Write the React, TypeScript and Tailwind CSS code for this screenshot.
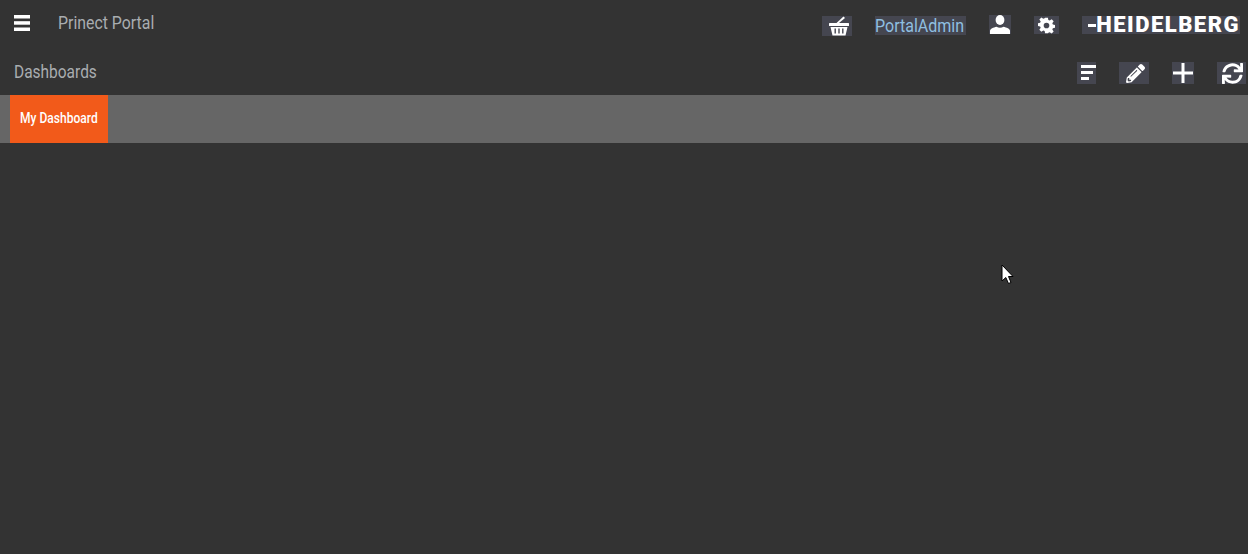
import { FaPencilAlt, FaSync } from "react-icons/fa"

const font = { fontFamily: "Roboto, sans-serif" }

function Hamburger() {
  return (
    <svg viewBox="0 0 16 16" className="ml-[14px] mt-[15px] w-[16px] h-[16px]" fill="white">
      <rect y="0" width="16" height="3.500" />
      <rect y="6.200" width="16" height="3.500" />
      <rect y="12.500" width="16" height="3.500" />
    </svg>
  )
}

function Basket() {
  return (
    <svg viewBox="0 0 20 20" className="w-[20px] h-[20px]" fill="white">
      <path d="M7.500 7 L14.500 0.500 L16 2 L10 7 Z" />
      <rect x="0" y="7" width="20" height="3" rx="0.5" />
      <path d="M1.500 11h17l-2 8.500H3.500z M5.500 12.500v5h1.400v-5z M9.300 12.500v5h1.400v-5z M13.100 12.500v5h1.400v-5z" fillRule="evenodd" />
    </svg>
  )
}

function User() {
  return (
    <svg viewBox="0 0 20 19" className="w-[20px] h-[19px]" fill="white">
      <ellipse cx="10" cy="5" rx="4.400" ry="5" />
      <path d="M0 19v-3c0-2.500 3.500-3.200 6.500-4.200 2 1.400 5 1.400 7 0 3 1 6.500 1.700 6.500 4.200v3z" />
    </svg>
  )
}

function Gear() {
  return (
    <svg viewBox="0 0 24 24" className="w-[17px] h-[17px]" fill="white">
      <path fillRule="evenodd" d="M10 1h4l.6 3.300 1.900.8 2.800-1.900 2.800 2.800-1.900 2.800.8 1.900 3 .6v4l-3 .6-.8 1.900 1.900 2.800-2.800 2.800-2.800-1.900-1.900.8L14 23h-4l-.6-3.300-1.900-.8-2.800 1.900-2.800-2.800 1.900-2.800-.8-1.900-3-.6v-4l3-.6.8-1.900-1.900-2.800 2.800-2.800 2.800 1.900 1.900-.8z M12 8a4 4 0 1 0 0 8a4 4 0 0 0 0-8z" />
    </svg>
  )
}

function Bars() {
  return (
    <svg viewBox="0 0 19 22" className="w-[19px] h-[22px]" fill="white">
      <rect x="4" y="3" width="15" height="3" />
      <rect x="4" y="9" width="12" height="3" />
      <rect x="4" y="15" width="8" height="3" />
    </svg>
  )
}

function PlusIcon() {
  return (
    <svg viewBox="0 0 20 20" className="w-[20px] h-[20px]" fill="white">
      <rect x="8.500" y="0" width="3" height="20" />
      <rect x="0" y="8.500" width="20" height="3" />
    </svg>
  )
}

function Cursor() {
  return (
    <svg viewBox="0 0 13 21" className="absolute left-[1001px] top-[264px] w-[13px] h-[21px]">
      <path d="M1 1 L1 17 L4.800 13.500 L7.500 19.500 L10 18.500 L7.500 12.500 L12 12.500 Z" fill="white" stroke="black" strokeWidth="1" />
    </svg>
  )
}

export default function App() {
  return (
    <div className="relative h-[554px] bg-[#333333] overflow-hidden" style={font}>
      <div className="h-[48px] flex items-start">
        <Hamburger />
        <div className="ml-[28px] mt-[11px] text-[19px] leading-[24px] text-[#a9adb0] origin-left scale-x-[0.835] whitespace-nowrap">Prinect Portal</div>
        <div className="ml-auto flex items-start pr-[8px] pt-[16px]">
          <div className="w-[30px] h-[20px] bg-[#454650] flex justify-center">
            <div className="ml-[4px]"><Basket /></div>
          </div>
          <div className="ml-[23px] w-[91px] h-[19px] bg-[#454650] text-[19px] leading-[19px] text-[#8fbfe0] whitespace-nowrap">
            <span className="inline-block origin-left scale-x-[0.843]">PortalAdmin</span>
          </div>
          <div className="ml-[23px] -mt-[1px] w-[22px] h-[19px] bg-[#454650] flex justify-center"><User /></div>
          <div className="ml-[23px] w-[25px] h-[18px] bg-[#454650] flex justify-center items-center"><Gear /></div>
          <div className="ml-[23px] w-[158px] h-[18px] bg-[#454650] flex items-center pl-[6px]">
            <div className="w-[9px] h-[3px] bg-white" />
            <div className="text-[22px] leading-[18px] font-black text-white tracking-[1.500px] whitespace-nowrap">HEIDELBERG</div>
          </div>
        </div>
      </div>

      <div className="h-[47px] flex items-start">
        <div className="ml-[14px] mt-[12px] text-[18px] leading-[24px] text-[#a9adb0] origin-left scale-x-[0.86] whitespace-nowrap">Dashboards</div>
        <div className="ml-auto flex items-start pr-[2px] pt-[14px]">
          <div className="w-[19px] h-[22px] bg-[#454650] flex justify-center"><Bars /></div>
          <div className="ml-[23px] pl-[3px] w-[30px] h-[22px] bg-[#454650] flex justify-center items-center">
            <FaPencilAlt className="w-[19px] h-[19px] text-white" />
          </div>
          <div className="ml-[23px] w-[22px] h-[22px] bg-[#454650] flex justify-center items-center"><PlusIcon /></div>
          <div className="ml-[23px] pl-[1px] w-[29px] h-[22px] bg-[#454650] flex justify-center items-center">
            <FaSync className="w-[21px] h-[21px] shrink-0 text-white" />
          </div>
        </div>
      </div>

      <div className="h-[48px] bg-[#666666] pl-[10px]">
        <div className="w-[98px] h-[48px] bg-[#f25a1a] flex items-center pl-[10px]">
          <span className="-mt-[2px] text-[14px] font-medium text-white origin-left scale-x-[0.86] whitespace-nowrap">My Dashboard</span>
        </div>
      </div>

      <Cursor />
    </div>
  )
}
